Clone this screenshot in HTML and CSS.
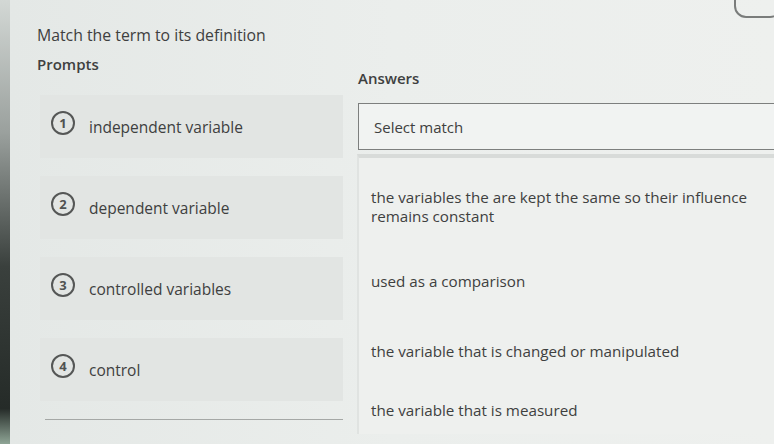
FILE: index.html
```html
<!DOCTYPE html>
<html lang="en">
<head>
    <meta charset="UTF-8">
    <meta name="viewport" content="width=device-width, initial-scale=1.0">
    <title>Match the term to its definition</title>
    <link rel="stylesheet" href="styles.css">
</head>
<body>
    <div class="screen">
        <div class="bezel"></div>
        <div class="page">
            <div class="topbar">
                <span class="pill"></span>
            </div>
            <h1 class="question">Match the term to its definition</h1>
            <div class="columns">
                <div class="prompts">
                    <h2 class="heading">Prompts</h2>
                    <div class="prompt">
                        <span class="num">1</span>
                        <span class="term">independent variable</span>
                    </div>
                    <div class="prompt">
                        <span class="num">2</span>
                        <span class="term">dependent variable</span>
                    </div>
                    <div class="prompt">
                        <span class="num">3</span>
                        <span class="term">controlled variables</span>
                    </div>
                    <div class="prompt">
                        <span class="num">4</span>
                        <span class="term">control</span>
                    </div>
                    <div class="drop-line"></div>
                </div>
                <div class="answers">
                    <h2 class="heading heading-answers">Answers</h2>
                    <div class="select">Select match</div>
                    <ul class="choices">
                        <li class="choice choice-first">the variables the are kept the same so their influence remains constant</li>
                        <li class="choice">used as a comparison</li>
                        <li class="choice">the variable that is changed or manipulated</li>
                        <li class="choice choice-last">the variable that is measured</li>
                    </ul>
                </div>
            </div>
        </div>
    </div>
</body>
</html>
```

FILE: styles.css
```css
body {
    margin: 0;
    width: 774px;
    height: 444px;
    overflow: hidden;
    font-family: "Open Sans", "Liberation Sans", sans-serif;
    color: #3e4040;
    background-color: #e9ecea;
}
.screen {
    display: flex;
    height: 444px;
}
.bezel {
    width: 10px;
    flex-shrink: 0;
    background: linear-gradient(to bottom, #d3d8d5 0%, #9aa09d 30%, #3a403d 60%, #252b28 92%, #8fa596 100%);
}
.page {
    flex: 1;
    padding-left: 27px;
    background: linear-gradient(to right, #e4e8e6 0%, #ebeeec 50%, #eef0ee 100%);
}
.topbar {
    display: flex;
    justify-content: flex-end;
    height: 16px;
}
.pill {
    width: 44px;
    height: 28px;
    margin-top: -14px;
    margin-right: -8px;
    border: 2px solid #7a7c7b;
    border-radius: 12px;
}
.question {
    margin: 8px 0 0;
    font-size: 15.8px;
    font-weight: 500;
    line-height: 22px;
}
.columns {
    display: grid;
    grid-template-columns: 306px 1fr;
    column-gap: 15px;
}
.heading {
    margin: 8px 0 21px;
    font-size: 15px;
    font-weight: 600;
    line-height: 20px;
}
.heading-answers {
    margin-top: 22px;
    margin-bottom: 15px;
}
.prompt {
    display: flex;
    align-items: flex-start;
    height: 63px;
    margin: 0 0 18px 3px;
    padding: 16px 0 0 11px;
    box-sizing: border-box;
    background-color: #e2e5e3;
}
.num {
    width: 20px;
    height: 20px;
    border: 2px solid #555756;
    border-radius: 50%;
    display: flex;
    align-items: center;
    justify-content: center;
    font-size: 13px;
    font-weight: 700;
    color: #505251;
}
.term {
    margin: 5px 0 0 14px;
    font-size: 15.5px;
    font-weight: 500;
}
.drop-line {
    height: 1px;
    margin: 0 0 0 8px;
    background-color: #a5a8a6;
}
.select {
    height: 47px;
    box-sizing: border-box;
    margin-right: -12px;
    padding: 13px 0 0 15px;
    border: 1px solid #7d7f7e;
    background-color: #f1f3f2;
    font-size: 15px;
    font-weight: 500;
}
.choices {
    list-style: none;
    margin: 4px -12px 0 -1px;
    padding: 10px 0 0;
    height: 266px;
    overflow: hidden;
    border-top: 4px solid #d8dbd9;
    border-left: 2px solid #e0e3e1;
    background-color: #eef0ee;
}
.choice {
    display: flex;
    align-items: center;
    height: 70px;
    padding: 0 10px 0 12px;
    font-size: 15.2px;
    font-weight: 500;
    line-height: 19px;
}
.choice-first {
    height: 78px;
}
.choice-last {
    height: 48px;
}
```
